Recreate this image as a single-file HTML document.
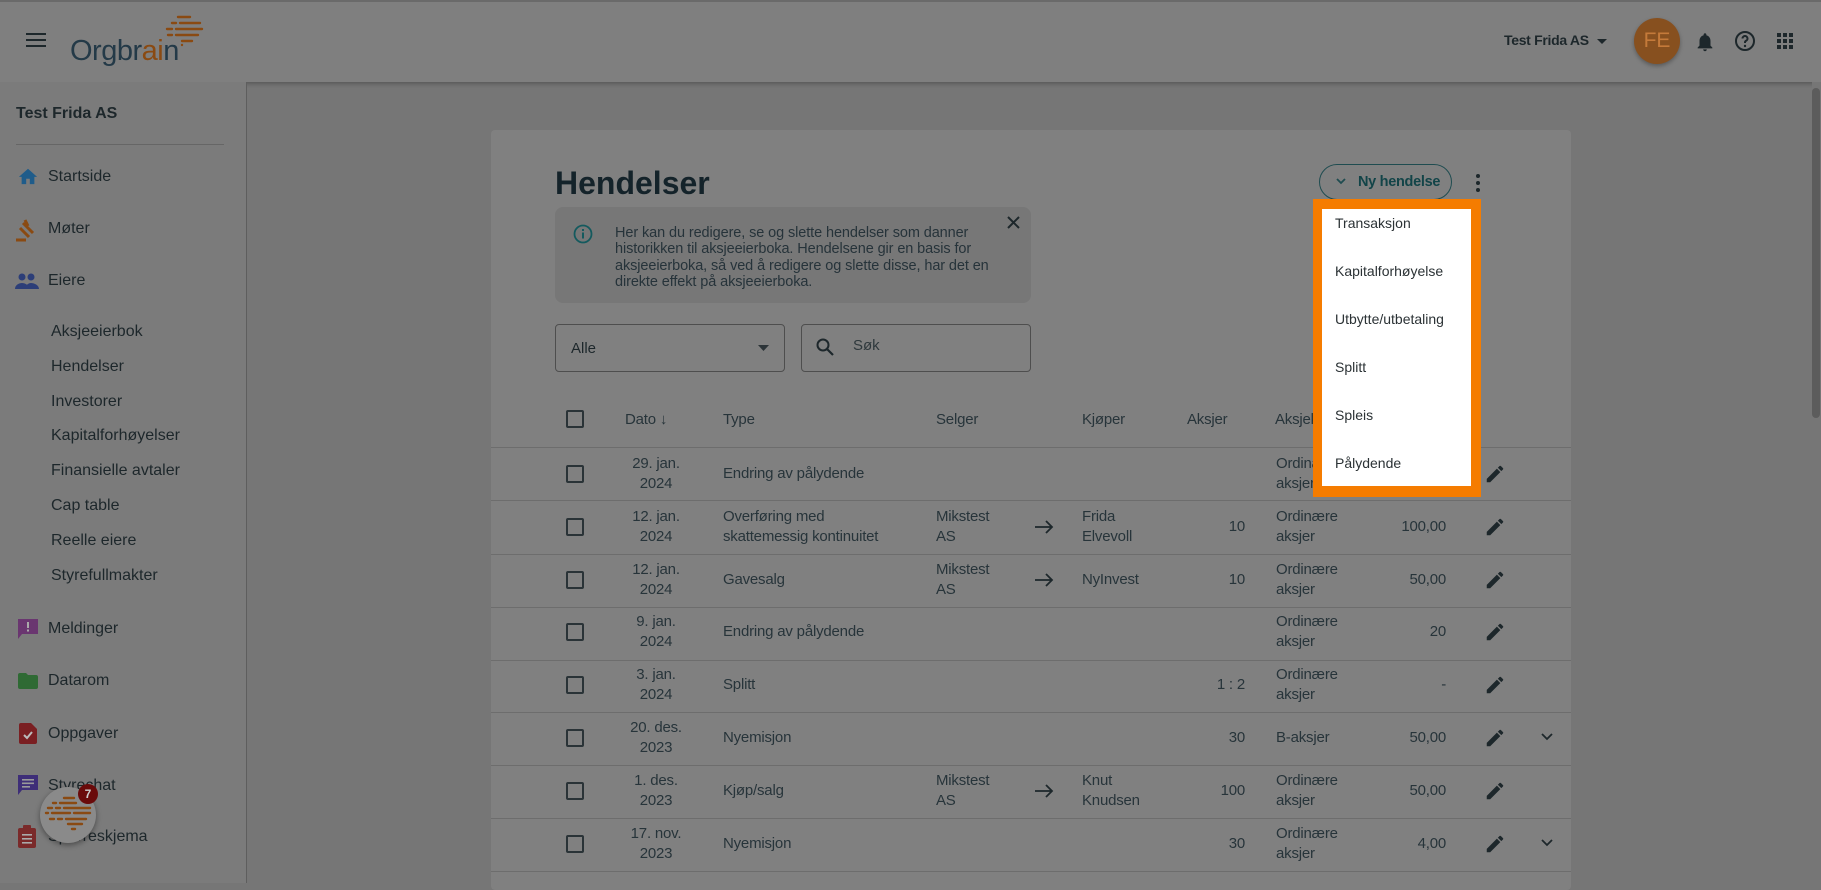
<!DOCTYPE html>
<html><head><meta charset="utf-8"><style>
*{box-sizing:border-box;margin:0;padding:0}
body{width:1821px;height:883px;overflow:hidden;background:#767676;font-family:"Liberation Sans",sans-serif;color:#1d272b;position:relative}
.abs{position:absolute}
.hdr{left:0;top:0;width:1821px;height:82px;background:#7f7f7f;border-top:2px solid #6a6a6a;box-shadow:0 2px 4px rgba(0,0,0,.25)}
.side{left:0;top:82px;width:247px;height:801px;background:#7b7b7b;border-right:1px solid #5e5e5e}
.card{left:491px;top:130px;width:1080px;height:760px;background:#808080;border-radius:4px}
.si{position:absolute;left:48px;font-size:16px;color:#1d272b}
.sub{position:absolute;left:51px;font-size:16px;color:#1d272b}
.cell{position:absolute;font-size:15px;line-height:20px;color:#27343a;letter-spacing:-.2px}
.cb{position:absolute;left:566px;width:18px;height:18px;border:2px solid #2a3337;border-radius:2px}
.line{position:absolute;left:491px;width:1080px;height:1px;background:#6d6d6d}
.menu div{position:absolute;left:13px;font-size:14px;color:#2b3235;line-height:16px}
</style></head><body>
<div class="abs hdr"></div>
<svg class="abs" style="left:26px;top:33px" width="20" height="16"><rect y="0" width="20" height="2" fill="#1d272b"/><rect y="6" width="20" height="2" fill="#1d272b"/><rect y="12" width="20" height="2" fill="#1d272b"/></svg>
<div class="abs" style="left:70px;top:35px;font-size:29px;color:#243a48;letter-spacing:-.5px">Orgbr<span style="color:#8a4a12">ai</span>n</div>
<svg class="abs" style="left:164px;top:14px" width="42" height="34">
<g stroke="#8a4a12" stroke-width="2.4" stroke-linecap="round">
<line x1="14" y1="3" x2="26" y2="3"/><line x1="8" y1="9" x2="12" y2="9"/><line x1="16" y1="9" x2="36" y2="9"/><line x1="3" y1="15" x2="8" y2="15"/><line x1="12" y1="15" x2="38" y2="15"/><line x1="4" y1="21" x2="8" y2="21"/><line x1="12" y1="21" x2="34" y2="21"/><line x1="18" y1="27" x2="28" y2="27"/><line x1="18" y1="31" x2="18" y2="31"/></g></svg>
<div class="abs" style="left:1504px;top:32px;font-size:14px;font-weight:bold;color:#1d272b;letter-spacing:-.3px">Test Frida AS</div>
<svg class="abs" style="left:1596px;top:38px" width="12" height="8"><path d="M1 1h10L6 6z" fill="#1d272b"/></svg>
<div class="abs" style="left:1634px;top:18px;width:46px;height:46px;border-radius:50%;background:#87501f;color:#c47a3a;font-size:21px;text-align:center;line-height:46px;box-shadow:0 2px 4px rgba(0,0,0,.3)">FE</div>
<svg class="abs" style="left:1694px;top:30px" width="22" height="24" viewBox="0 0 24 24"><path d="M12 22c1.1 0 2-.9 2-2h-4c0 1.1.9 2 2 2zm6-6v-5c0-3.1-1.6-5.6-4.5-6.3V4c0-.8-.7-1.5-1.5-1.5s-1.5.7-1.5 1.5v.7C7.6 5.4 6 7.9 6 11v5l-2 2v1h16v-1l-2-2z" fill="#1d272b"/></svg>
<svg class="abs" style="left:1733px;top:29px" width="24" height="24" viewBox="0 0 24 24"><circle cx="12" cy="12" r="9" fill="none" stroke="#1d272b" stroke-width="2"/><path d="M9.5 9.5a2.5 2.5 0 1 1 3.5 2.3c-.7.4-1 .9-1 1.7v.5" fill="none" stroke="#1d272b" stroke-width="2"/><circle cx="12" cy="17" r="1.2" fill="#1d272b"/></svg>
<svg class="abs" style="left:1777px;top:33px" width="16" height="16"><g fill="#1d272b"><rect x="0" y="0" width="4" height="4"/><rect x="6" y="0" width="4" height="4"/><rect x="12" y="0" width="4" height="4"/><rect x="0" y="6" width="4" height="4"/><rect x="6" y="6" width="4" height="4"/><rect x="12" y="6" width="4" height="4"/><rect x="0" y="12" width="4" height="4"/><rect x="6" y="12" width="4" height="4"/><rect x="12" y="12" width="4" height="4"/></g></svg>

<div class="abs side">
<div style="position:absolute;left:16px;top:23px;font-size:16px;font-weight:bold">Test Frida AS</div>
<div style="position:absolute;left:16px;top:62px;width:208px;height:1px;background:#666"></div>
</div>
<svg class="abs" style="left:17px;top:166px" width="22" height="20" viewBox="0 0 24 22"><path d="M10 20v-6h4v6h5v-8h3L12 3 2 12h3v8z" fill="#1f5c8a"/></svg>
<div class="si" style="top:168px">Startside</div>
<svg class="abs" style="left:15px;top:218px" width="22" height="24" viewBox="0 0 22 24"><g stroke="#8a4a12" stroke-width="3"><line x1="5" y1="10" x2="14" y2="19"/><line x1="8" y1="5" x2="18" y2="15"/><line x1="10" y1="2" x2="13" y2="8"/><line x1="1" y1="22" x2="11" y2="22"/></g></svg>
<div class="si" style="top:220px">Møter</div>
<svg class="abs" style="left:15px;top:272px" width="24" height="18" viewBox="0 0 24 18"><circle cx="7" cy="5" r="3.5" fill="#2c3e78"/><circle cx="16" cy="5" r="3.5" fill="#2c3e78"/><path d="M0 17c0-4 4-6 7-6s7 2 7 6zM10 17c0-3 3-6 6-6s8 2 8 6z" fill="#2c3e78"/></svg>
<div class="si" style="top:272px">Eiere</div>
<div class="sub" style="top:323px">Aksjeeierbok</div>
<div class="sub" style="top:358px">Hendelser</div>
<div class="sub" style="top:393px">Investorer</div>
<div class="sub" style="top:427px">Kapitalforhøyelser</div>
<div class="sub" style="top:462px">Finansielle avtaler</div>
<div class="sub" style="top:497px">Cap table</div>
<div class="sub" style="top:532px">Reelle eiere</div>
<div class="sub" style="top:567px">Styrefullmakter</div>
<svg class="abs" style="left:18px;top:619px" width="20" height="20"><path d="M0 0h20v15H4l-4 5z" fill="#6a3670"/><rect x="9" y="3" width="2" height="6" fill="#aaa"/><rect x="9" y="10.5" width="2" height="2" fill="#aaa"/></svg>
<div class="si" style="top:620px">Meldinger</div>
<svg class="abs" style="left:18px;top:673px" width="20" height="16"><path d="M0 2a2 2 0 0 1 2-2h6l2 2h8a2 2 0 0 1 2 2v10a2 2 0 0 1-2 2H2a2 2 0 0 1-2-2z" fill="#2f6a34"/></svg>
<div class="si" style="top:672px">Datarom</div>
<svg class="abs" style="left:19px;top:723px" width="18" height="21"><path d="M2 0h10l6 6v13a2 2 0 0 1-2 2H2a2 2 0 0 1-2-2V2a2 2 0 0 1 2-2z" fill="#7a1f22"/><path d="M5 12l3 3 5-6" stroke="#bbb" stroke-width="2" fill="none"/></svg>
<div class="si" style="top:725px">Oppgaver</div>
<svg class="abs" style="left:18px;top:775px" width="20" height="20"><path d="M0 0h20v15H4l-4 5z" fill="#3e2e78"/><g fill="#999"><rect x="4" y="4" width="12" height="1.6"/><rect x="4" y="7.5" width="12" height="1.6"/><rect x="4" y="11" width="8" height="1.6"/></g></svg>
<div class="si" style="top:777px">Styrechat</div>
<svg class="abs" style="left:18px;top:825px" width="20" height="23"><rect x="0" y="3" width="18" height="20" rx="2" fill="#7a2a2a"/><rect x="5" y="0" width="8" height="5" rx="1" fill="#7a2a2a"/><g fill="#aaa"><rect x="4" y="9" width="10" height="1.6"/><rect x="4" y="13" width="10" height="1.6"/><rect x="4" y="17" width="10" height="1.6"/></g></svg>
<div class="si" style="top:828px">Spørreskjema</div>
<div class="abs" style="left:40px;top:787px;width:56px;height:56px;border-radius:50%;background:#8a8a8a;box-shadow:0 2px 6px rgba(0,0,0,.4)"></div>
<svg class="abs" style="left:44px;top:796px" width="50" height="38"><g stroke="#8a4a12" stroke-width="2.4" stroke-linecap="round"><line x1="20" y1="2" x2="30" y2="2"/><line x1="9" y1="7" x2="12" y2="7"/><line x1="16" y1="7" x2="32" y2="7"/><line x1="4" y1="12" x2="8" y2="12"/><line x1="12" y1="12" x2="16" y2="12"/><line x1="20" y1="12" x2="46" y2="12"/><line x1="2" y1="17" x2="4" y2="17"/><line x1="8" y1="17" x2="26" y2="17"/><line x1="30" y1="17" x2="46" y2="17"/><line x1="6" y1="23" x2="10" y2="23"/><line x1="14" y1="23" x2="18" y2="23"/><line x1="22" y1="23" x2="42" y2="23"/><line x1="24" y1="28" x2="38" y2="28"/><line x1="28" y1="33" x2="31" y2="33"/></g></svg>
<div class="abs" style="left:78px;top:784px;width:20px;height:20px;border-radius:50%;background:#6a0a0a;color:#ccc;font-size:12px;font-weight:bold;text-align:center;line-height:20px">7</div>

<div class="abs card"></div>
<div class="abs" style="left:555px;top:165px;font-size:32px;font-weight:bold;color:#14232a">Hendelser</div>
<div class="abs" style="left:1319px;top:164px;width:133px;height:36px;border:1.5px solid #1f4c50;border-radius:18px"></div>
<svg class="abs" style="left:1336px;top:178px" width="10" height="8"><path d="M1 1l4 4 4-4" stroke="#1f4c50" stroke-width="1.8" fill="none"/></svg>
<div class="abs" style="left:1358px;top:174px;font-size:14.5px;font-weight:bold;color:#124448;letter-spacing:-.3px">Ny hendelse</div>
<svg class="abs" style="left:1475px;top:173px" width="6" height="20"><circle cx="3" cy="3" r="2" fill="#1d272b"/><circle cx="3" cy="10" r="2" fill="#1d272b"/><circle cx="3" cy="17" r="2" fill="#1d272b"/></svg>

<div class="abs" style="left:555px;top:207px;width:476px;height:96px;background:#777;border-radius:8px"></div>
<svg class="abs" style="left:573px;top:224px" width="20" height="20"><circle cx="10" cy="10" r="8.5" fill="none" stroke="#145a5e" stroke-width="1.8"/><rect x="9" y="8.5" width="2" height="6" fill="#145a5e"/><rect x="9" y="5" width="2" height="2" fill="#145a5e"/></svg>
<div class="abs" style="left:615px;top:225px;font-size:14.5px;line-height:16.3px;color:#26333a;width:400px;letter-spacing:-.1px">Her kan du redigere, se og slette hendelser som danner historikken til aksjeeierboka. Hendelsene gir en basis for aksjeeierboka, så ved å redigere og slette disse, har det en direkte effekt på aksjeeierboka.</div>
<svg class="abs" style="left:1007px;top:216px" width="13" height="13"><path d="M1 1l11 11M12 1L1 12" stroke="#1d272b" stroke-width="2"/></svg>

<div class="abs" style="left:555px;top:324px;width:230px;height:48px;border:1px solid #4e4e4e;border-radius:4px"></div>
<div class="abs" style="left:571px;top:340px;font-size:15px">Alle</div>
<svg class="abs" style="left:758px;top:345px" width="11" height="6"><path d="M0 0h11L5.5 6z" fill="#2c3438"/></svg>
<div class="abs" style="left:801px;top:324px;width:230px;height:48px;border:1px solid #4e4e4e;border-radius:4px"></div>
<svg class="abs" style="left:816px;top:338px" width="18" height="18"><circle cx="7" cy="7" r="5.5" fill="none" stroke="#1d272b" stroke-width="2"/><path d="M11 11l6 6" stroke="#1d272b" stroke-width="2.2"/></svg>
<div class="abs" style="left:853px;top:337px;font-size:15px;color:#2e383c">Søk</div>

<div class="cb" style="top:410px"></div>
<div class="cell" style="left:625px;top:410px">Dato <span style="font-weight:bold">↓</span></div>
<div class="cell" style="left:723px;top:410px">Type</div>
<div class="cell" style="left:936px;top:410px">Selger</div>
<div class="cell" style="left:1082px;top:410px">Kjøper</div>
<div class="cell" style="left:1187px;top:410px">Aksjer</div>
<div class="cell" style="left:1275px;top:410px">Aksjek</div>
<div class="line" style="top:447px"></div>
<div class="line" style="top:500px"></div>
<div class="line" style="top:554px"></div>
<div class="line" style="top:607px"></div>
<div class="line" style="top:660px"></div>
<div class="line" style="top:712px"></div>
<div class="line" style="top:765px"></div>
<div class="line" style="top:818px"></div>
<div class="line" style="top:871px"></div>

<div id="rows"></div>
<script>
const rows=[
["29. jan.|2024","Endring av pålydende","","","", "","Ordinære|aksjer","",0],
["12. jan.|2024","Overføring med|skattemessig kontinuitet","Mikstest|AS",1,"Frida|Elvevoll","10","Ordinære|aksjer","100,00",0],
["12. jan.|2024","Gavesalg","Mikstest|AS",1,"NyInvest","10","Ordinære|aksjer","50,00",0],
["9. jan.|2024","Endring av pålydende","","","","","Ordinære|aksjer","20",0],
["3. jan.|2024","Splitt","","","","1 : 2","Ordinære|aksjer","-",0],
["20. des.|2023","Nyemisjon","","","","30","B-aksjer","50,00",1],
["1. des.|2023","Kjøp/salg","Mikstest|AS",1,"Knut|Knudsen","100","Ordinære|aksjer","50,00",0],
["17. nov.|2023","Nyemisjon","","","","30","Ordinære|aksjer","4,00",1]];
let h="";
rows.forEach((r,i)=>{const c=474+i*52.8;
const t=(s,l,st)=>{if(!s)return"";const n=s.split("|").length;return `<div class="cell" style="${l};top:${c-n*10}px;${st||""}">${s.split("|").join("<br>")}</div>`;};
h+=`<div class="cb" style="top:${c-9}px"></div>`;
h+=t(r[0],"left:600px;width:112px","text-align:center");
h+=t(r[1],"left:723px");h+=t(r[2],"left:936px");
if(r[3])h+=`<svg class="abs" style="left:1035px;top:${c-7}px" width="20" height="14"><path d="M0 7h17M11 1l6 6-6 6" stroke="#1d272b" stroke-width="1.8" fill="none"/></svg>`;
h+=t(r[4],"left:1082px");h+=t(r[5],"left:1150px;width:95px","text-align:right");
h+=t(r[6],"left:1276px");h+=t(r[7],"left:1350px;width:96px","text-align:right");
h+=`<svg class="abs" style="left:1484px;top:${c-11}px" width="22" height="22" viewBox="0 0 24 24"><path d="M3 17.25V21h3.75L17.81 9.94l-3.75-3.75zM20.71 7.04a1 1 0 0 0 0-1.41l-2.34-2.34a1 1 0 0 0-1.41 0l-1.83 1.83 3.75 3.75z" fill="#1d272b"/></svg>`;
if(r[8])h+=`<svg class="abs" style="left:1541px;top:${c-5}px" width="12" height="8"><path d="M1 1l5 5 5-5" stroke="#1d272b" stroke-width="1.8" fill="none"/></svg>`;
});
document.getElementById("rows").innerHTML=h;
</script>

<div class="abs" style="left:1313px;top:199px;width:168px;height:298px;background:#f57c00"></div>
<div class="abs menu" style="left:1322px;top:209px;width:149px;height:277px;background:#fff">
<div style="top:6px">Transaksjon</div>
<div style="top:54px">Kapitalforhøyelse</div>
<div style="top:102px">Utbytte/utbetaling</div>
<div style="top:150px">Splitt</div>
<div style="top:198px">Spleis</div>
<div style="top:246px">Pålydende</div>
</div>
<div class="abs" style="left:1812px;top:82px;width:9px;height:801px;background:#767676"></div>
<div class="abs" style="left:1812px;top:88px;width:8px;height:330px;background:#5c5c5c;border-radius:4px"></div>
</body></html>
